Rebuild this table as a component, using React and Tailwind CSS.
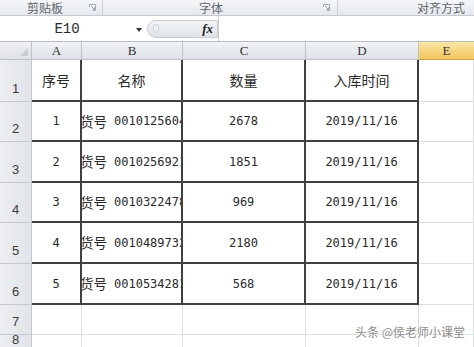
import React from 'react';

const cjk = { fontFamily: '"Noto Sans CJK SC", sans-serif' };
const mono = { fontFamily: '"DejaVu Sans Mono", monospace' };
const serif = { fontFamily: '"Liberation Serif", serif' };
const sans = { fontFamily: '"Liberation Sans", sans-serif' };

const rows = [
  { n: 1, code: '001012560456', qty: 2678 },
  { n: 2, code: '001025692134', qty: 1851 },
  { n: 3, code: '001032247861', qty: 969 },
  { n: 4, code: '001048973245', qty: 2180 },
  { n: 5, code: '001053428179', qty: 568 },
];

const Launcher = () => (
  <svg width="7" height="7" viewBox="0 0 7 7" className="shrink-0">
    <path d="M0.5 3V0.5H6.5V6.5H4" fill="none" stroke="#a3abb4" strokeWidth="1" />
    <path d="M2 2L5.5 5.5M5.5 3.5V5.5H3.5" fill="none" stroke="#a3abb4" strokeWidth="1" />
  </svg>
);

const cell = 'flex items-center justify-center bg-white border-r-2 border-b-2 border-[#404040] text-[#2a2a2a]';
const empty = 'bg-white border-r border-b border-[#dcdfe2]';
const rowHead = 'flex items-end justify-center pb-[3px] bg-gradient-to-r from-[#eceef1] to-[#e1e4e8] border-r border-b border-[#c3c8cf] text-[13px] text-[#3a3a3a]';
const colHead = 'flex items-center justify-center bg-gradient-to-b from-[#f2f4f6] to-[#dde1e6] border-r border-b border-[#bcc2ca] text-[13px] text-[#333]';

export default function App() {
  return (
    <div className="relative w-[474px] h-[347px] overflow-hidden bg-white">
      {/* ribbon group labels */}
      <div className="flex h-[16px] bg-gradient-to-b from-[#f4f6f8] to-[#e6e9ed] border-b border-[#c4c9cf] text-[12px] text-[#62666b]" style={cjk}>
        <div className="flex w-[103px] shrink-0 items-center border-r border-[#cfd3d8] pl-[27px] pr-[6px]">
          <span className="leading-none whitespace-nowrap">剪贴板</span>
          <span className="ml-auto"><Launcher /></span>
        </div>
        <div className="flex w-[235px] shrink-0 items-center border-r border-[#cfd3d8] pl-[96px] pr-[7px]">
          <span className="leading-none whitespace-nowrap">字体</span>
          <span className="ml-auto"><Launcher /></span>
        </div>
        <div className="flex flex-1 items-center pl-[79px]">
          <span className="leading-none whitespace-nowrap">对齐方式</span>
        </div>
      </div>

      {/* formula bar */}
      <div className="flex h-[26px] items-center bg-white border-b border-[#b7bdc5]">
        <div className="flex w-[147px] shrink-0 items-center pt-[2px]">
          <span className="w-[134px] text-center text-[14px] text-[#2a2a2a]" style={{ fontFamily: '"Liberation Mono", monospace' }}>E10</span>
          <svg width="6" height="4" viewBox="0 0 6 4" className="ml-[2px]">
            <path d="M0 0H6L3 4Z" fill="#333" />
          </svg>
        </div>
        <div className="flex h-[18px] w-[71px] shrink-0 items-center justify-between rounded-l-full bg-gradient-to-b from-[#f3f5f7] to-[#dfe3e8] border border-[#c9ced5] pl-[5px] pr-[4px]">
          <span className="block h-[9px] w-[6px] rounded-full border border-[#cfd4da] bg-[#eef0f3]" />
          <span className="text-[13px] font-bold italic text-[#222]" style={serif}>fx</span>
        </div>
        <div className="h-full flex-1 border-l border-[#c9ced5] bg-white" />
      </div>

      {/* sheet */}
      <div className="grid grid-cols-[32px_50px_101px_123px_113px_1fr] grid-rows-[18px_42px_40px_41px_40px_41px_41px_30px_18px]">
        <div className="flex items-end justify-end bg-gradient-to-b from-[#eef0f2] to-[#dfe2e6] border-r border-b border-[#bcc2ca] p-[3px]">
          <svg width="8" height="8" viewBox="0 0 8 8">
            <path d="M8 0V8H0Z" fill="#c9cdd2" />
          </svg>
        </div>
        {['A', 'B', 'C', 'D'].map(l => (
          <div key={l} className={colHead} style={serif}>{l}</div>
        ))}
        <div className="flex items-center justify-center bg-gradient-to-b from-[#fae6a6] to-[#f3c65c] border-b border-[#c9a24a] text-[13px] text-[#333]" style={serif}>E</div>

        {/* header row */}
        <div className={rowHead} style={sans}>1</div>
        <div className={cell + ' text-[14px]'} style={cjk}>序号</div>
        <div className={cell + ' text-[14px]'} style={cjk}>名称</div>
        <div className={cell + ' text-[14px]'} style={cjk}>数量</div>
        <div className={cell + ' text-[14px]'} style={cjk}>入库时间</div>
        <div className={empty} />

        {rows.map(r => (
          <React.Fragment key={r.n}>
            <div className={rowHead} style={sans}>{r.n + 1}</div>
            <div className={cell + ' text-[12px]'} style={mono}>{r.n}</div>
            <div className={cell + ' !justify-start overflow-hidden'}>
              <span className="-ml-[2px] flex shrink-0 items-center whitespace-nowrap">
                <span className="text-[13.5px]" style={cjk}>货号</span>
                <span className="ml-[7px] text-[12px]" style={mono}>{r.code}</span>
              </span>
            </div>
            <div className={cell + ' text-[12px]'} style={mono}>{r.qty}</div>
            <div className={cell + ' text-[12px]'} style={mono}>2019/11/16</div>
            <div className={empty} />
          </React.Fragment>
        ))}

        {[7, 8].map(n => (
          <React.Fragment key={n}>
            <div className={rowHead} style={sans}>{n}</div>
            <div className={empty} />
            <div className={empty} />
            <div className={empty} />
            <div className={empty} />
            <div className={empty} />
          </React.Fragment>
        ))}
      </div>

      {/* watermark */}
      <div
        className="absolute left-[355px] top-[323px] whitespace-nowrap text-[12px] text-[#8c8c8c]"
        style={{ ...cjk, textShadow: '0 0 2px #fff, 0 0 2px #fff' }}
      >
        头条 @侯老师小课堂
      </div>
    </div>
  );
}
